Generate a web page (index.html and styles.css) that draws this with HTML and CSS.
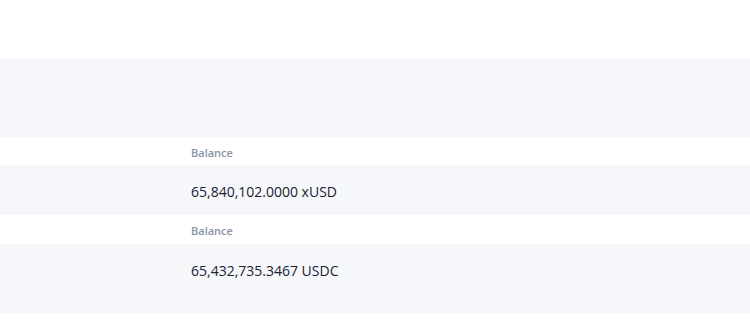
FILE: index.html
```html
<!DOCTYPE html>
<html>
<head>
<meta charset="utf-8">
<link rel="stylesheet" href="styles.css">
</head>
<body>
<div class="page">
  <div class="top"></div>
  <div class="banner"></div>
  <div class="label-row"><span class="label">Balance</span></div>
  <div class="value-row"><span class="value">65,840,102.0000 xUSD</span></div>
  <div class="label-row second"><span class="label">Balance</span></div>
  <div class="value-row last"><span class="value">65,432,735.3467 USDC</span></div>
</div>
</body>
</html>
```
FILE: styles.css
```css
* { box-sizing: border-box; }
html, body { margin: 0; padding: 0; background: #fff; }
body { font-family: "Open Sans", "Noto Sans", sans-serif; }
.page { width: 750px; height: 324px; display: flex; flex-direction: column; }
.top { height: 59px; }
.banner { height: 78px; background: #f5f7fa; }
.label-row { height: 28px; padding-left: 191px; padding-top: 2px; display: flex; align-items: center; }
.label-row.second { height: 29px; }
.label { font-size: 11px; font-weight: 600; color: #8a93a6; }
.value-row { height: 50px; background: #f5f7fa; padding-left: 191px; padding-top: 2px; display: flex; align-items: center; }
.value-row.last { height: 69px; align-items: flex-start; padding-top: 17px; }
.value { font-size: 14px; color: #1a2233; }
```
